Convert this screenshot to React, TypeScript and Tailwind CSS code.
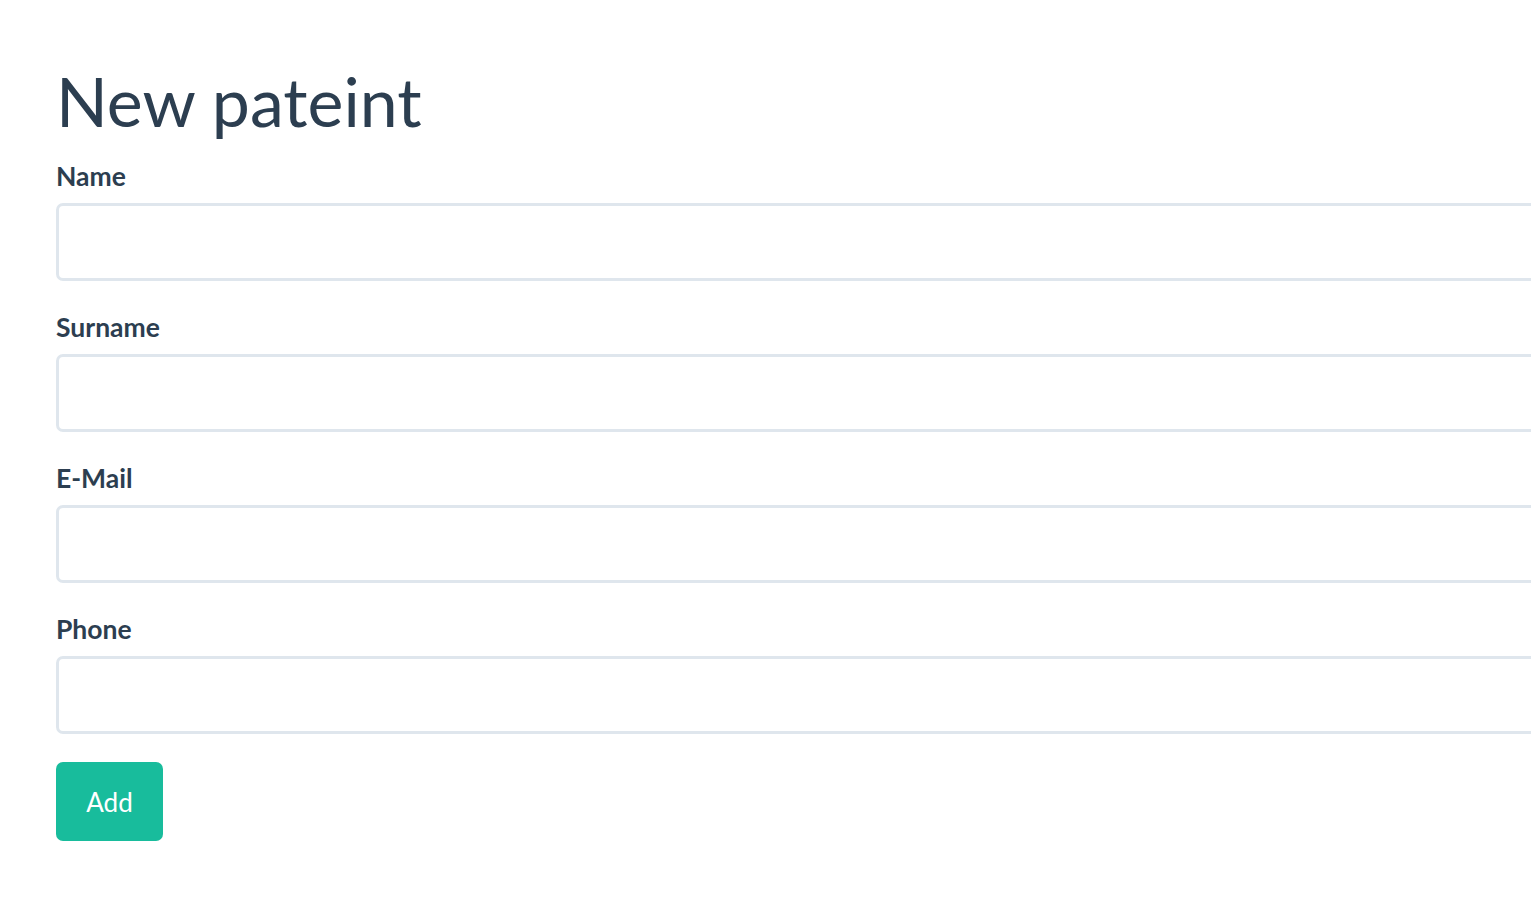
import React from 'react';

const fields = ['Name', 'Surname', 'E-Mail', 'Phone'];

const App = () => {
    return (
        <div className="h-screen w-full overflow-hidden bg-white text-[#2c3e50] font-['Lato','Liberation_Sans',sans-serif]">
            <form className="pl-[56px]" onSubmit={(e) => e.preventDefault()}>
                <h1 className="mt-[63px] mb-[19px] text-[68px] leading-[76px] font-normal whitespace-nowrap">New pateint</h1>

                {fields.map((label) => (
                    <div key={label} className="mb-[28px]">
                        <label className="block mb-[9px] text-[26.5px] leading-[36px] font-bold">{label}</label>
                        <input
                            type="text"
                            className="block w-[1540px] h-[78px] rounded-[7px] border-[3px] border-[#dfe6ed] bg-white px-[26px] text-[26px] outline-none"
                        />
                    </div>
                ))}

                <button
                    type="submit"
                    className="block w-[107px] h-[79px] rounded-[7px] bg-[#18bc9c] text-white text-[26px] leading-none"
                >
                    Add
                </button>
            </form>
        </div>
    );
};

export default App;
